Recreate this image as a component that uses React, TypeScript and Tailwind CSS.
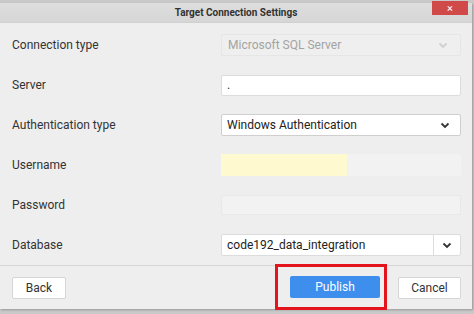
import React from "react";

const Chevron = ({ color = "#333" }: { color?: string }) => (
  <svg width="10" height="7" viewBox="0 0 10 7">
    <path d="M1.5 1.5 L5 5 L8.5 1.5" fill="none" stroke={color} strokeWidth="1.8" />
  </svg>
);

const Row = ({ label, children }: { label: string; children: React.ReactNode }) => (
  <div className="flex items-center h-[40px]">
    <div className="w-[221px] pl-[12px] text-[12px] text-[#333]">{label}</div>
    <div className="w-[240px]">{children}</div>
  </div>
);

export default function App() {
  return (
    <div className="w-[474px] h-[314px] bg-[#c9c9c9] overflow-hidden relative" style={{ fontFamily: "Roboto, 'Liberation Sans', sans-serif" }}>
      <div className="absolute left-0 top-[3px] w-[472px] h-[306px] bg-[#eeeeee] shadow-[1px_1px_2px_rgba(0,0,0,0.25)] flex flex-col">
        <div className="h-[22px] bg-gradient-to-b from-[#dedede] to-[#d6d6d6] border-b border-[#d0d0d0] flex items-center justify-center relative">
          <span className="text-[10px] font-bold text-[#333]">Target Connection Settings</span>
          <div className="absolute right-[4px] top-[-2px] w-[36px] h-[14px] bg-[#d04a4a] flex items-center justify-center text-white text-[11px] leading-none">×</div>
        </div>
        <div className="flex flex-col pt-[2px]">
          <Row label="Connection type">
            <div className="h-[22px] bg-[#efefef] border border-[#e6e6e6] rounded-[2px] flex items-center justify-between pl-[6px] pr-[12px]">
              <span className="text-[12px] text-[#a3a3a3]">Microsoft SQL Server</span>
              <Chevron color="#d0d0d0" />
            </div>
          </Row>
          <Row label="Server">
            <div className="h-[21px] bg-white border border-[#dcdcdc] rounded-[2px] flex items-center pl-[5px]">
              <span className="text-[12px] text-[#333]">.</span>
            </div>
          </Row>
          <Row label="Authentication type">
            <div className="h-[22px] bg-white border border-[#cfcfcf] rounded-[2px] flex items-center justify-between pl-[5px] pr-[10px]">
              <span className="text-[12px] text-[#222]">Windows Authentication</span>
              <Chevron />
            </div>
          </Row>
          <Row label="Username">
            <div className="h-[22px] bg-[#f2f2f2] rounded-[2px] flex">
              <div className="w-[126px] h-full bg-[#fff9cf]" />
            </div>
          </Row>
          <Row label="Password">
            <div className="h-[20px] bg-[#f2f2f2] border border-[#e8e8e8] rounded-[2px]" />
          </Row>
          <Row label="Database">
            <div className="h-[22px] bg-white border border-[#dcdcdc] rounded-[2px] flex items-center">
              <span className="flex-1 pl-[5px] text-[12px] text-[#222]">code192_data_integration</span>
              <div className="w-[27px] h-full border-l border-[#dcdcdc] flex items-center justify-center">
                <Chevron />
              </div>
            </div>
          </Row>
        </div>
        <div className="border-t border-[#d6d6d6] flex items-center h-[44px] pl-[12px] pr-[11px]">
          <div className="w-[54px] h-[22px] bg-white border border-[#d6d6d6] rounded-[2px] flex items-center justify-center text-[12px] text-[#333]">Back</div>
          <div className="flex-1" />
          <div className="border-[3px] border-[#e3141c] w-[112px] h-[46px] flex items-center pl-[12px] mt-[-1px]">
            <div className="w-[90px] h-[22px] bg-[#3d8eed] rounded-[2px] flex items-center justify-center text-[12px] text-white">Publish</div>
          </div>
          <div className="w-[11px]" />
          <div className="w-[63px] h-[22px] bg-white border border-[#d6d6d6] rounded-[2px] flex items-center justify-center text-[12px] text-[#333]">Cancel</div>
        </div>
      </div>
    </div>
  );
}
